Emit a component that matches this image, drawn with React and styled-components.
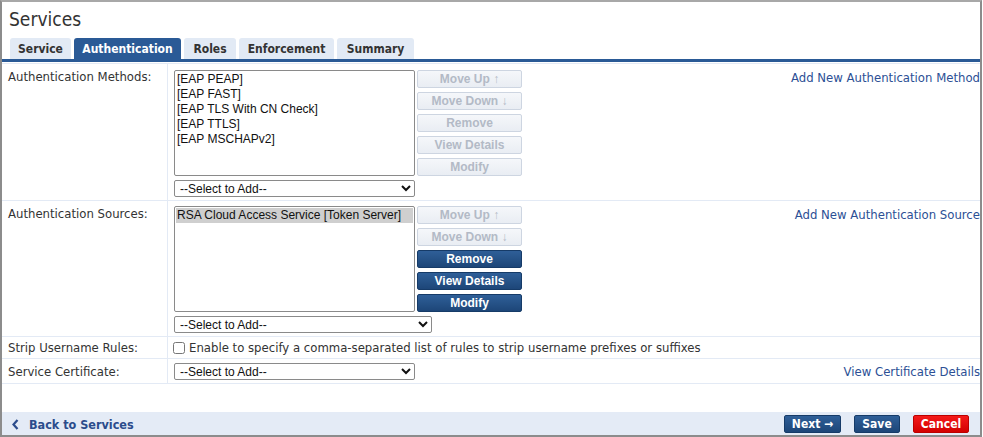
import React from 'react'
import styled, { createGlobalStyle } from 'styled-components'

const GlobalStyle = createGlobalStyle`
  html, body { margin: 0; padding: 0; background: #fff; }
  body { font-family: "DejaVu Sans Condensed", "DejaVu Sans", sans-serif; color: #333; }
`

const Frame = styled.div`
  box-sizing: border-box;
  width: 982px;
  height: 437px;
  border: 2px solid #8c8c8c;
  border-top-color: #a8a8a8;
  display: flex;
  flex-direction: column;
  overflow: hidden;
`

const Title = styled.h1`
  margin: 0;
  padding: 6px 0 0 7px;
  height: 29px;
  font-size: 19px;
  font-weight: normal;
  color: #333;
  box-sizing: border-box;
`

const TabBar = styled.div`
  display: flex;
  gap: 3px;
  padding: 7px 0 0 8px;
  border-bottom: 3px solid #2a5a96;
`

const Tab = styled.div`
  width: ${p => p.w}px;
  height: 21px;
  display: flex;
  align-items: center;
  justify-content: center;
  font-size: 12px;
  font-weight: bold;
  border-radius: 3px 3px 0 0;
  background: ${p => (p.active ? '#2a5a96' : '#e2eaf5')};
  color: ${p => (p.active ? '#fff' : '#333')};
`

const Body = styled.div`
  flex: 1;
  padding-top: 1px;
  display: flex;
  flex-direction: column;
`

const Row = styled.div`
  display: grid;
  grid-template-columns: 166px 1fr;
  border-top: 1px solid #e3eaf5;
  &:last-of-type { border-bottom: 1px solid #e3eaf5; }
`

const Label = styled.div`
  font-size: 13px;
  line-height: 15px;
  color: #333;
  padding: ${p => p.pad || '5px 0 0 6px'};
  border-right: 1px solid #e3eaf5;
`

const Content = styled.div`
  display: flex;
  align-items: ${p => (p.center ? 'center' : 'flex-start')};
  padding: ${p => p.pad || '6px 0 3px 6px'};
`

const Stack = styled.div`
  width: 241px;
  display: flex;
  flex-direction: column;
  gap: 4px;
`

const ListBox = styled.div`
  box-sizing: border-box;
  width: 241px;
  height: ${p => p.h}px;
  border: 1px solid #8a8a8a;
  border-radius: 2px;
  padding: 1px;
  font-family: "Liberation Sans", Arial, sans-serif;
  font-size: 12px;
  line-height: 15px;
  color: #111;
`

const ListItem = styled.div`
  padding-left: 1px;
  background: ${p => (p.selected ? '#cfcfcf' : 'transparent')};
`

const Select = styled.select`
  box-sizing: border-box;
  width: ${p => p.w}px;
  flex-shrink: 0;
  height: 17px;
  border: 1px solid #8a8a8a;
  border-radius: 2px;
  background: #fff;
  padding: 0 0 0 1px;
  font-family: "Liberation Sans", Arial, sans-serif;
  font-size: 12px;
  color: #111;
`

const ButtonCol = styled.div`
  display: flex;
  flex-direction: column;
  gap: 4px;
  margin-left: 2px;
`

const SideButton = styled.div`
  box-sizing: border-box;
  width: 105px;
  height: 18px;
  display: flex;
  align-items: center;
  justify-content: center;
  font-family: "Liberation Sans", Arial, sans-serif;
  font-size: 12px;
  font-weight: bold;
  border-radius: 2px;
  border: 1px solid ${p => (p.enabled ? '#163b68' : '#cdd5e1')};
  background: ${p =>
    p.enabled
      ? 'linear-gradient(#2f5f98, #1d4678)'
      : 'linear-gradient(#f5f7fa, #e9edf3)'};
  color: ${p => (p.enabled ? '#fff' : '#b3bac6')};
`

const Link = styled.a`
  margin-left: auto;
  color: #2c4f95;
  font-size: 13px;
  line-height: 15px;
  text-decoration: none;
  padding-top: ${p => p.top || 0}px;
  white-space: nowrap;
`

const CheckLabel = styled.label`
  display: flex;
  align-items: center;
  gap: 4px;
  font-size: 13px;
  line-height: 15px;
  color: #333;
  input { margin: 0; width: 12px; height: 12px; }
`

const Footer = styled.div`
  margin-top: auto;
  height: 23px;
  background: #e4ebf6;
  display: flex;
  align-items: center;
  padding: 0 11px 0 10px;
`

const BackLink = styled.a`
  display: flex;
  align-items: center;
  gap: 10px;
  color: #2b4c8c;
  font-size: 12.5px;
  font-weight: bold;
  text-decoration: none;
  margin-top: 2px;
`

const FooterButtons = styled.div`
  margin-left: auto;
  display: flex;
  gap: 13px;
  margin-top: 1px;
`

const FooterButton = styled.div`
  box-sizing: border-box;
  width: ${p => p.w}px;
  height: 18px;
  display: flex;
  align-items: center;
  justify-content: center;
  font-size: 12px;
  font-weight: bold;
  color: #fff;
  border-radius: 2px;
  border: 1px solid ${p => (p.danger ? '#b00' : '#163b68')};
  background: ${p =>
    p.danger ? 'linear-gradient(#f41a1a, #d30000)' : 'linear-gradient(#2f5f98, #1d4678)'};
`

const methods = ['[EAP PEAP]', '[EAP FAST]', '[EAP TLS With CN Check]', '[EAP TTLS]', '[EAP MSCHAPv2]']

function Buttons({ enabled }) {
  return (
    <ButtonCol>
      <SideButton>Move Up ↑</SideButton>
      <SideButton>Move Down ↓</SideButton>
      <SideButton enabled={enabled}>Remove</SideButton>
      <SideButton enabled={enabled}>View Details</SideButton>
      <SideButton enabled={enabled}>Modify</SideButton>
    </ButtonCol>
  )
}

export default function App() {
  return (
    <Frame>
      <GlobalStyle />
      <Title>Services</Title>
      <TabBar>
        <Tab w={61}>Service</Tab>
        <Tab w={107} active>Authentication</Tab>
        <Tab w={52}>Roles</Tab>
        <Tab w={95}>Enforcement</Tab>
        <Tab w={77}>Summary</Tab>
      </TabBar>
      <Body>
        <Row>
          <Label>Authentication Methods:</Label>
          <Content>
            <Stack>
              <ListBox h={106}>
                {methods.map(m => <ListItem key={m}>{m}</ListItem>)}
              </ListBox>
              <Select w={241}><option>--Select to Add--</option></Select>
            </Stack>
            <Buttons />
            <Link href="#" top={0}>Add New Authentication Method</Link>
          </Content>
        </Row>
        <Row>
          <Label>Authentication Sources:</Label>
          <Content pad="5px 0 3px 6px">
            <Stack>
              <ListBox h={106}>
                <ListItem selected>RSA Cloud Access Service [Token Server]</ListItem>
              </ListBox>
              <Select w={258}><option>--Select to Add--</option></Select>
            </Stack>
            <Buttons enabled />
            <Link href="#" top={1}>Add New Authentication Source</Link>
          </Content>
        </Row>
        <Row>
          <Label pad="3px 0 3px 6px">Strip Username Rules:</Label>
          <Content center pad="0 0 0 5px">
            <CheckLabel>
              <input type="checkbox" />
              Enable to specify a comma-separated list of rules to strip username prefixes or suffixes
            </CheckLabel>
          </Content>
        </Row>
        <Row>
          <Label pad="5px 0 4px 6px">Service Certificate:</Label>
          <Content center pad="0 0 0 6px">
            <Select w={241}><option>--Select to Add--</option></Select>
            <Link href="#">View Certificate Details</Link>
          </Content>
        </Row>
      </Body>
      <Footer>
        <BackLink href="#">
          <svg width="7" height="11" viewBox="0 0 7 11">
            <path d="M5.5 1 L1.5 5.5 L5.5 10" fill="none" stroke="#2b4c8c" strokeWidth="2.2" />
          </svg>
          Back to Services
        </BackLink>
        <FooterButtons>
          <FooterButton w={57}>Next →</FooterButton>
          <FooterButton w={46}>Save</FooterButton>
          <FooterButton w={56} danger>Cancel</FooterButton>
        </FooterButtons>
      </Footer>
    </Frame>
  )
}
